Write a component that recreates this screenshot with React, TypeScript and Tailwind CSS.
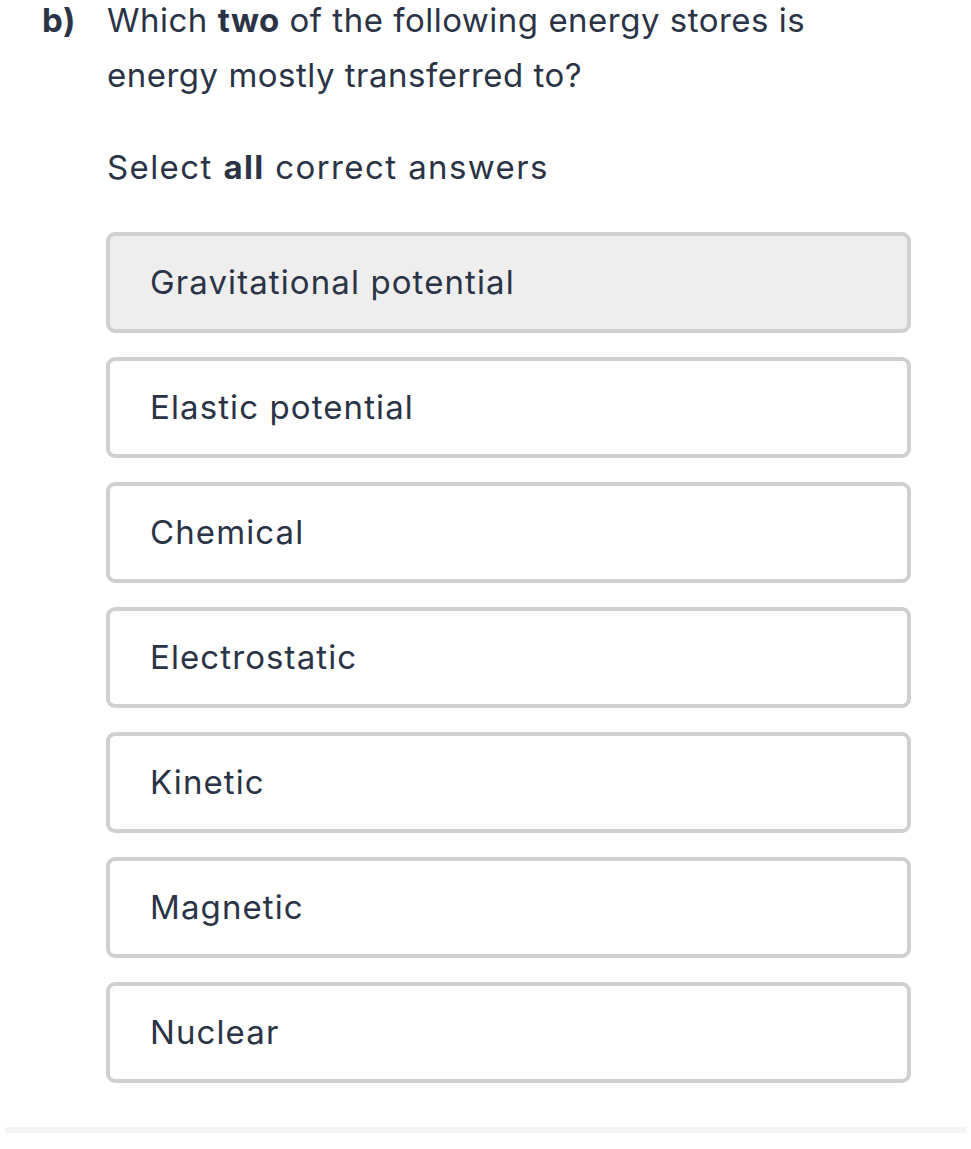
import React from "react";

const options = [
  "Gravitational potential",
  "Elastic potential",
  "Chemical",
  "Electrostatic",
  "Kinetic",
  "Magnetic",
  "Nuclear",
];

export default function App() {
  return (
    <div
      className="w-[971px] h-[1149px] bg-white text-[#2b3446] overflow-hidden"
      style={{ fontFamily: 'Inter, "Noto Sans", sans-serif' }}
    >
      <div className="flex pl-[42px]">
        <div className="w-[65px] shrink-0 font-bold text-[33px] leading-[40px] tracking-[0.5px]">b)</div>
        <div className="text-[33px] leading-[40px] w-[800px] flex flex-col gap-[15px] tracking-[0.5px]">
          <div>
            Which <span className="font-bold">two</span> of the following energy stores is
          </div>
          <div>energy mostly transferred to?</div>
        </div>
      </div>
      <div className="pl-[107px] mt-[52px] text-[33px] leading-[40px] tracking-[1.4px]">
        Select <span className="font-bold">all</span> correct answers
      </div>
      <div className="flex flex-col gap-[24px] ml-[106px] w-[805px] mt-[45px]">
        {options.map((o, i) => (
          <div
            key={o}
            className={`h-[101px] rounded-[9px] border-[4px] border-[#d0d0d0] flex items-center pl-[40px] text-[33px] tracking-[1.1px] ${
              i === 0 ? "bg-[#eeeeee]" : "bg-white"
            }`}
          >
            {o}
          </div>
        ))}
      </div>
      <div className="mt-[44px] mx-[5px] h-[6px] bg-[#f5f5f5]" />
    </div>
  );
}
